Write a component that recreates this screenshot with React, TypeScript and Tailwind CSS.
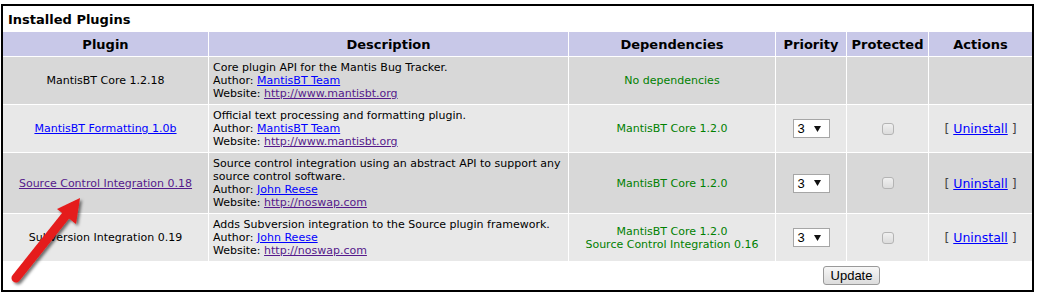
import React from 'react';

type Plugin = {
    name: string;
    link?: 'blue' | 'purple';
    desc: string[];
    author: string;
    site: string;
    deps: string[];
    core?: boolean;
    bg: string;
};

const plugins: Plugin[] = [
    { name: 'MantisBT Core 1.2.18', desc: ['Core plugin API for the Mantis Bug Tracker.'], author: 'MantisBT Team', site: 'http://www.mantisbt.org', deps: ['No dependencies'], core: true, bg: 'bg-[#d8d8d8]' },
    { name: 'MantisBT Formatting 1.0b', link: 'blue', desc: ['Official text processing and formatting plugin.'], author: 'MantisBT Team', site: 'http://www.mantisbt.org', deps: ['MantisBT Core 1.2.0'], bg: 'bg-[#e8e8e8]' },
    { name: 'Source Control Integration 0.18', link: 'purple', desc: ['Source control integration using an abstract API to support any', 'source control software.'], author: 'John Reese', site: 'http://noswap.com', deps: ['MantisBT Core 1.2.0'], bg: 'bg-[#d8d8d8]' },
    { name: 'Subversion Integration 0.19', desc: ['Adds Subversion integration to the Source plugin framework.'], author: 'John Reese', site: 'http://noswap.com', deps: ['MantisBT Core 1.2.0', 'Source Control Integration 0.16'], bg: 'bg-[#e8e8e8]' },
];

const headers = ['Plugin', 'Description', 'Dependencies', 'Priority', 'Protected', 'Actions'];

const PrioritySelect = () => (
    <div className="w-[37px] h-[19px] bg-white border border-[#a6a6a6] flex items-center justify-between pl-[4px] pr-[8px] font-['Liberation_Sans',sans-serif] text-[13px] text-black">
        <span>3</span>
        <svg width="7" height="6" viewBox="0 0 7 6"><path d="M0 0h7L3.5 6z" fill="#111" /></svg>
    </div>
);

const Checkbox = () => (
    <div className="w-[12px] h-[12px] rounded-[3px] border border-[#b4b4b4] bg-gradient-to-b from-[#f0f0f0] to-[#dcdcdc]" />
);

const Arrow = () => (
    <svg className="absolute left-0 top-0 pointer-events-none" width="120" height="302" viewBox="0 0 120 302">
        <defs>
            <filter id="sh" x="-50%" y="-50%" width="200%" height="200%">
                <feDropShadow dx="2" dy="2" stdDeviation="1.5" floodColor="#000" floodOpacity="0.55" />
            </filter>
        </defs>
        <g filter="url(#sh)">
            <line x1="16" y1="274" x2="67" y2="210" stroke="#e51b1b" strokeWidth="9" strokeLinecap="round" />
            <polygon points="80,194 57,205 76,220" fill="#e51b1b" />
        </g>
    </svg>
);

export default function App() {
    return (
        <div className="relative w-[1037px] h-[302px] bg-white font-['DejaVu_Sans',sans-serif] text-[11px] leading-[13px] text-black">
            <div className="ml-px mt-[4px] w-[1033px] h-[288px] border-2 border-black">
                <div className="h-[26px] pl-[5px] flex items-center font-bold text-[13px]">Installed Plugins</div>
                <div className="grid grid-cols-[205px_359px_206px_70px_81px_103px] gap-px">
                    {headers.map(h => (
                        <div key={h} className="h-[24px] bg-[#c8c8e8] flex items-center justify-center font-bold text-[13px]">{h}</div>
                    ))}
                    {plugins.map(p => (
                        <React.Fragment key={p.name}>
                            <div className={`${p.bg} flex items-center justify-center`}>
                                {p.link ? (
                                    <a href="#" className={`underline ${p.link === 'blue' ? 'text-[#0000ff]' : 'text-[#551a8b]'}`}>{p.name}</a>
                                ) : (
                                    <span>{p.name}</span>
                                )}
                            </div>
                            <div className={`${p.bg} px-[4px] py-[4px]`}>
                                {p.desc.map(d => <div key={d}>{d}</div>)}
                                <div>Author: <a href="#" className="underline text-[#0000ff]">{p.author}</a></div>
                                <div>Website: <a href="#" className="underline text-[#551a8b]">{p.site}</a></div>
                            </div>
                            <div className={`${p.bg} flex flex-col items-center justify-center text-[#008000]`}>
                                {p.deps.map(d => <div key={d}>{d}</div>)}
                            </div>
                            <div className={`${p.bg} flex items-center justify-center`}>
                                {!p.core && <PrioritySelect />}
                            </div>
                            <div className={`${p.bg} flex items-center justify-center`}>
                                {!p.core && <Checkbox />}
                            </div>
                            <div className={`${p.bg} flex items-center justify-center text-[12.5px]`}>
                                {!p.core && (
                                    <span className="text-[#444]">[ <a href="#" className="underline text-[#0000ff]">Uninstall</a> ]</span>
                                )}
                            </div>
                        </React.Fragment>
                    ))}
                </div>
                <div className="flex pl-[820px] pt-[5px]">
                    <button className="w-[57px] h-[19px] border border-[#999] rounded-[3px] bg-gradient-to-b from-[#f7f7f7] to-[#dcdcdc] font-['Liberation_Sans',sans-serif] text-[13px] leading-none text-black">
                        Update
                    </button>
                </div>
            </div>
            <Arrow />
        </div>
    );
}
